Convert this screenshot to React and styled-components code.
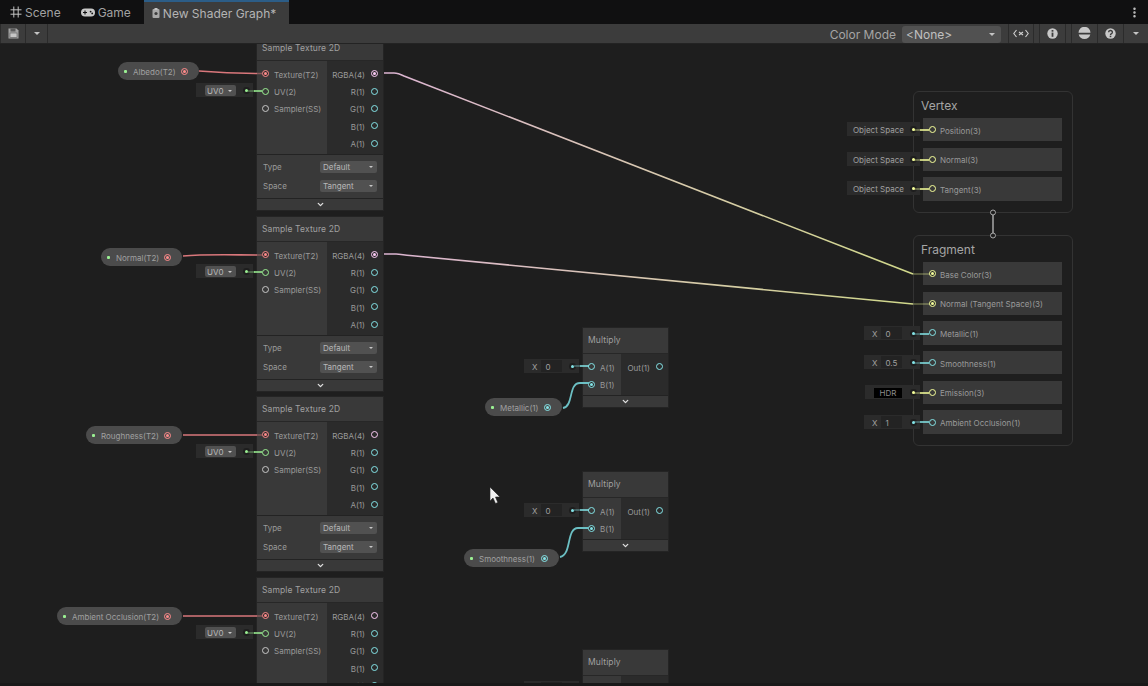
import React from "react";
import styled, { createGlobalStyle } from "styled-components";
import { ChevronDown, MoreVertical } from "lucide-react";

const CYAN = "#84e4e7";
const GREEN = "#9aef92";
const YELLOW = "#f6ff9a";
const PINK = "#fbcbf4";
const RED = "#ff8b8b";
const GREY = "#c8c8c8";

const GlobalStyle = createGlobalStyle`
  html, body {
    margin: 0;
    padding: 0;
    background: #1e1e1e;
    overflow: hidden;
  }
  * {
    box-sizing: border-box;
  }
`;

const Window = styled.div`
  width: 1148px;
  height: 686px;
  display: flex;
  flex-direction: column;
  font-family: Inter, "Noto Sans", sans-serif;
  color: #a0a0a0;
`;

const TabBar = styled.div`
  height: 24px;
  flex: none;
  background: #101011;
  display: flex;
  align-items: stretch;
`;

const Tab = styled.div`
  display: flex;
  align-items: center;
  gap: ${(p) => p.$gap || 3}px;
  padding: 0 ${(p) => p.$right}px 0 ${(p) => p.$left}px;
  margin-left: ${(p) => p.$shift || 0}px;
  font-size: 12px;
  color: ${(p) => (p.$active ? "#b4b4b4" : "#a2a2a2")};
  background: ${(p) => (p.$active ? "#3c3c3c" : "transparent")};
  border-top: ${(p) => (p.$active ? "2px solid #2c5d87" : "none")};
`;

const TabMenu = styled.div`
  margin-left: auto;
  width: 27px;
  display: flex;
  align-items: center;
  justify-content: center;
  color: #c4c4c4;
`;

const Toolbar = styled.div`
  height: 20px;
  flex: none;
  background: #3c3c3c;
  border-bottom: 1px solid #232323;
  display: flex;
  align-items: stretch;
`;

const ToolButton = styled.div`
  width: ${(p) => p.$w || 26}px;
  display: flex;
  align-items: center;
  justify-content: center;
  border-right: ${(p) => (p.$last ? "none" : "1px solid #2b2b2b")};
  border-left: ${(p) => (p.$first ? "1px solid #2b2b2b" : "none")};
  color: #c4c4c4;
`;

const Caret = styled.span`
  width: 0;
  height: 0;
  border-left: ${(p) => p.$s || 3}px solid transparent;
  border-right: ${(p) => p.$s || 3}px solid transparent;
  border-top: ${(p) => p.$s || 3}px solid ${(p) => p.$c || "#c4c4c4"};
  flex: none;
`;

const ToolLabel = styled.div`
  margin-left: auto;
  margin-right: 6px;
  padding-top: 1px;
  align-self: center;
  font-size: 12px;
  color: #a5a5a5;
`;

const ColorSelect = styled.div`
  width: 99px;
  height: 17px;
  margin: 2px 7px 0 0;
  padding: 0 6px 0 4px;
  border-radius: 3px;
  background: #515151;
  font-size: 12px;
  color: #c0c0c0;
  display: flex;
  align-items: center;
  justify-content: space-between;
`;

const Canvas = styled.div`
  flex: 1;
  position: relative;
  overflow: hidden;
  background: #1e1e1e;
`;

const BottomEdge = styled.div`
  height: 3px;
  flex: none;
  background: #191919;
`;

const Wires = styled.svg`
  position: absolute;
  left: 0;
  top: -44px;
  width: 1148px;
  height: 686px;
  z-index: 3;
  pointer-events: none;
`;

const Node = styled.div`
  position: absolute;
  left: ${(p) => p.$x}px;
  top: ${(p) => p.$y - 44}px;
  width: ${(p) => p.$w}px;
  background: #2b2b2b;
  box-shadow: 0 0 0 1px #242424;
`;

const NodeTitle = styled.div`
  height: ${(p) => p.$h}px;
  background: #393939;
  padding: 0 0 1px 5px;
  display: flex;
  align-items: center;
  font-size: 8.5px;
  letter-spacing: 0.12px;
  color: #a0a0a0;
  border-bottom: 1px solid #272727;
`;

const Ports = styled.div`
  display: flex;
  height: ${(p) => p.$h}px;
`;

const PortColumn = styled.div`
  width: ${(p) => p.$w}px;
  padding: ${(p) => p.$pad}px 0 0 5px;
  display: flex;
  flex-direction: column;
  background: ${(p) => (p.$input ? "#393939" : "#2b2b2b")};
`;

const PortRow = styled.div`
  height: 17.4px;
  display: flex;
  align-items: center;
  justify-content: ${(p) => (p.$out ? "flex-end" : "flex-start")};
  gap: ${(p) => (p.$out ? 6 : 5)}px;
  padding-right: ${(p) => (p.$out ? "5px" : "0")};
  font-size: 8px;
  color: #9a9a9a;
  white-space: nowrap;
`;

const PortText = styled.span`
  padding-top: 2px;
`;

const Port = styled.span`
  width: 7px;
  height: 7px;
  flex: none;
  border-radius: 50%;
  border: 1px solid ${(p) => p.$c};
  background: ${(p) => (p.$on ? "#2a2a2a" : "transparent")};
  display: flex;
  align-items: center;
  justify-content: center;
  &::after {
    content: "";
    display: ${(p) => (p.$on ? "block" : "none")};
    width: 3px;
    height: 3px;
    border-radius: 50%;
    background: ${(p) => p.$c};
  }
`;

const Controls = styled.div`
  height: 44px;
  background: #393939;
  border-top: 1px solid #232323;
  padding: 6px 6px 0 6px;
  display: flex;
  flex-direction: column;
  gap: 7px;
`;

const ControlRow = styled.div`
  height: 12px;
  display: flex;
  align-items: center;
  justify-content: space-between;
  font-size: 8px;
  color: #9a9a9a;
`;

const MiniSelect = styled.div`
  width: 57px;
  height: 12px;
  padding: 0 4px 0 3px;
  border-radius: 2px;
  background: #515151;
  font-size: 8px;
  color: #b8b8b8;
  display: flex;
  align-items: center;
  justify-content: space-between;
`;

const Collapse = styled.div`
  height: 12px;
  background: #393939;
  border-top: 1px solid #232323;
  display: flex;
  align-items: center;
  justify-content: center;
  color: #e0e0e0;
`;

const Pill = styled.div`
  position: absolute;
  left: ${(p) => p.$x}px;
  top: ${(p) => p.$y - 44}px;
  width: ${(p) => p.$w}px;
  height: 18px;
  border-radius: 9px;
  background: #4b4b4b;
  padding: 0 11px 0 6px;
  display: flex;
  align-items: center;
  font-size: 8px;
  color: #a0a0a0;
  white-space: nowrap;
`;

const PillDot = styled.span`
  width: 3px;
  height: 3px;
  flex: none;
  background: ${GREEN};
  border-radius: 1px;
  margin-right: 6px;
`;

const PillPort = styled(Port)`
  margin-left: auto;
  background: transparent;
`;

const Field = styled.div`
  position: absolute;
  left: ${(p) => p.$x}px;
  top: ${(p) => p.$y - 44}px;
  width: ${(p) => p.$w}px;
  height: 14px;
  background: #2b2b2b;
  display: flex;
  align-items: center;
  padding: 1px 5px 0 ${(p) => p.$pad || 5}px;
  font-size: 8px;
  color: #a0a0a0;
  z-index: 2;
`;

const FieldDot = styled.span`
  width: 3px;
  height: 3px;
  flex: none;
  border-radius: 50%;
  margin-left: auto;
  background: ${(p) => p.$c};
  box-shadow: 0 0 0 2px #1e1e1e;
`;

const FieldInput = styled.span`
  width: 21px;
  height: 12px;
  margin: -1px 0 0 4px;
  padding: 1px 0 0 4px;
  background: #232323;
  color: #a0a0a0;
  display: flex;
  align-items: center;
`;

const HdrSwatch = styled.span`
  width: 28px;
  height: 10px;
  margin-left: 4px;
  background: #000;
  color: #8c8c8c;
  font-size: 8px;
  display: flex;
  align-items: center;
  justify-content: center;
`;

const UvSelect = styled.span`
  width: 31px;
  height: 11px;
  margin-left: 4px;
  padding: 0 4px 0 2px;
  background: #515151;
  border-radius: 2px;
  color: #b8b8b8;
  display: flex;
  align-items: center;
  justify-content: space-between;
`;

const Stack = styled.div`
  position: absolute;
  left: 913px;
  top: ${(p) => p.$y - 44}px;
  width: 160px;
  height: ${(p) => p.$h}px;
  border: 1px solid #333;
  border-radius: 6px;
  background: #1e1e1e;
  padding: 6px 10px 0 9px;
`;

const StackTitle = styled.div`
  height: 20px;
  margin-left: -2px;
  font-size: 12px;
  color: #a5a5a5;
`;

const Block = styled.div`
  height: 23.2px;
  margin-bottom: 6.5px;
  background: #393939;
  display: flex;
  align-items: center;
  gap: 4px;
  padding-left: 6px;
  font-size: 8px;
  color: #9a9a9a;
  white-space: nowrap;
`;

const Cursor = styled.svg`
  position: absolute;
  left: 489px;
  top: ${486 - 44}px;
  z-index: 5;
`;

const OUTS = [
  ["RGBA(4)", PINK],
  ["R(1)", CYAN],
  ["G(1)", CYAN],
  ["B(1)", CYAN],
  ["A(1)", CYAN],
];

const SampleTexture = ({ y, clipped, usedRgba }) => (
  <Node $x={257} $y={y} $w={126}>
    <NodeTitle $h={25}>Sample Texture 2D</NodeTitle>
    <Ports $h={93}>
      <PortColumn $input $w={70} $pad={4}>
        <PortRow>
          <Port $c={RED} $on />
          <PortText>Texture(T2)</PortText>
        </PortRow>
        <PortRow>
          <Port $c={GREEN} />
          <PortText>UV(2)</PortText>
        </PortRow>
        <PortRow>
          <Port $c={GREY} />
          <PortText>Sampler(SS)</PortText>
        </PortRow>
      </PortColumn>
      <PortColumn $w={56} $pad={4}>
        {OUTS.map(([label, c], i) => (
          <PortRow $out key={label}>
            <PortText>{label}</PortText>
            <Port $c={c} $on={i === 0 && usedRgba} />
          </PortRow>
        ))}
      </PortColumn>
    </Ports>
    {!clipped && (
      <>
        <Controls>
          <ControlRow>
            Type
            <MiniSelect>
              Default
              <Caret $c="#c8c8c8" $s={2.5} />
            </MiniSelect>
          </ControlRow>
          <ControlRow>
            Space
            <MiniSelect>
              Tangent
              <Caret $c="#c8c8c8" $s={2.5} />
            </MiniSelect>
          </ControlRow>
        </Controls>
        <Collapse>
          <ChevronDown size={9} strokeWidth={3.5} />
        </Collapse>
      </>
    )}
  </Node>
);

const Multiply = ({ y, clipped }) => (
  <Node $x={583} $y={y} $w={85}>
    <NodeTitle $h={26}>Multiply</NodeTitle>
    <Ports $h={41}>
      <PortColumn $input $w={38} $pad={4}>
        <PortRow>
          <Port $c={CYAN} />
          <PortText>A(1)</PortText>
        </PortRow>
        <PortRow>
          <Port $c={CYAN} $on />
          <PortText>B(1)</PortText>
        </PortRow>
      </PortColumn>
      <PortColumn $w={47} $pad={4}>
        <PortRow $out>
          <PortText>Out(1)</PortText>
          <Port $c={CYAN} />
        </PortRow>
      </PortColumn>
    </Ports>
    {!clipped && (
      <Collapse>
        <ChevronDown size={9} strokeWidth={3.5} />
      </Collapse>
    )}
  </Node>
);

const PropertyPill = ({ x, y, w, label, c }) => (
  <Pill $x={x} $y={y} $w={w}>
    <PillDot />
    <PortText>{label}</PortText>
    <PillPort $c={c} $on />
  </Pill>
);

const InlineObjectSpace = ({ y }) => (
  <Field $x={847} $y={y} $w={73} $pad={6}>
    Object Space
    <FieldDot $c={YELLOW} />
  </Field>
);

const InlineNumber = ({ x, y, w, value, c }) => (
  <Field $x={x} $y={y} $w={w} $pad={8}>
    X
    <FieldInput>{value}</FieldInput>
    <FieldDot $c={c} />
  </Field>
);

const InlineUv = ({ y }) => (
  <Field $x={196} $y={y} $w={57} $pad={5}>
    <UvSelect>
      UV0
      <Caret $c="#c8c8c8" $s={2.5} />
    </UvSelect>
    <FieldDot $c={GREEN} />
  </Field>
);

const StackBlock = ({ label, c, on }) => (
  <Block>
    <Port $c={c} $on={on} />
    <PortText>{label}</PortText>
  </Block>
);

const Wire = ({ d, c, w = 1.6, o = 1 }) => <path d={d} stroke={c} strokeWidth={w} opacity={o} fill="none" />;

// short connector between an inline field and its port, dim where it leaves the dot
const Stub = ({ from, to, y, c }) => (
  <>
    <Wire d={`M${from + 2} ${y} L${from + 8} ${y}`} c={c} o={0.4} />
    <Wire d={`M${from + 8} ${y} L${to} ${y}`} c={c} w={1.8} o={0.85} />
  </>
);

const WireLayer = () => (
  <Wires viewBox="0 0 1148 686">
    <defs>
      <linearGradient id="rgbaToYellow" gradientUnits="userSpaceOnUse" x1="384" y1="0" x2="913" y2="0">
        <stop offset="0" stopColor="#dcb4d2" />
        <stop offset="0.5" stopColor="#d8c8b0" />
        <stop offset="1" stopColor="#d0d88a" />
      </linearGradient>
    </defs>
    <Wire d="M199 71 C225 73 240 73.3 257 73.5" c="#d9777b" />
    <Wire d="M183 256 C205 254 235 255 257 255" c="#d9777b" />
    <Wire d="M183 435 L257 435" c="#d9777b" />
    <Wire d="M183 616 C205 616 235 616 257 616" c="#d9777b" />
    <Wire d="M257 73.5 L262 73.5 M257 255 L262 255 M257 435 L262 435 M257 616 L262 616" c="#d9777b" o={0.5} />
    <Wire d="M384 73 L394 73 C398 73 400 74 404 76 L913 274" c="url(#rgbaToYellow)" />
    <Wire d="M384 254 L396 254 C400 254 404 255 410 255.5 L913 304" c="url(#rgbaToYellow)" />
    <path d="M913 274 L930 274 M913 304 L930 304" stroke={YELLOW} strokeWidth="1.5" opacity="0.35" fill="none" />
    <Stub from={246} to={262} y={91} c={GREEN} />
    <Stub from={246} to={262} y={272} c={GREEN} />
    <Stub from={246} to={262} y={452} c={GREEN} />
    <Stub from={246} to={262} y={633} c={GREEN} />
    <Stub from={912} to={929} y={130} c={YELLOW} />
    <Stub from={912} to={929} y={160} c={YELLOW} />
    <Stub from={912} to={929} y={189} c={YELLOW} />
    <Stub from={912} to={929} y={393} c={YELLOW} />
    <Stub from={912} to={929} y={334} c={CYAN} />
    <Stub from={912} to={929} y={363} c={CYAN} />
    <Stub from={912} to={929} y={422} c={CYAN} />
    <Stub from={572} to={589} y={366} c={CYAN} />
    <Stub from={572} to={589} y={510} c={CYAN} />
    <Wire d="M563 408 C574 406 568 383 580 383 L589 383" c="#6cc0c4" w={1.8} />
    <Wire d="M560 557 C572 555 566 528 578 528 L589 528" c="#6cc0c4" w={1.8} />
    <line x1="993" y1="214" x2="993" y2="234" stroke="#a8a8a8" strokeWidth="1.5" />
    <circle cx="993" cy="212.5" r="2.5" fill="#1e1e1e" stroke="#a8a8a8" />
    <circle cx="993" cy="235.5" r="2.5" fill="#1e1e1e" stroke="#a8a8a8" />
  </Wires>
);

const SceneIcon = () => (
  <svg width="12" height="12" viewBox="0 0 12 12" fill="none" stroke="#c4c4c4" strokeWidth="1">
    <path d="M3.8 0.5 V11.5 M8.2 0.5 V11.5 M0.5 3.8 H11.5 M0.5 8.2 H11.5" />
  </svg>
);

const GameIcon = () => (
  <svg width="14" height="9" viewBox="0 0 14 9">
    <rect x="0" y="0.5" width="14" height="8" rx="4" fill="#c8c8c8" />
    <path d="M4 2.5 V6.5 M2 4.5 H6" stroke="#101011" strokeWidth="1.1" />
    <circle cx="9.6" cy="3.6" r="0.9" fill="#101011" />
    <circle cx="11.2" cy="5.4" r="0.9" fill="#101011" />
  </svg>
);

const GraphIcon = () => (
  <svg width="8" height="10" viewBox="0 0 8 10">
    <rect x="0.5" y="1" width="7" height="9" rx="1" fill="#a8a8a8" />
    <rect x="2.5" y="0" width="3" height="2" fill="#c4c4c4" />
    <circle cx="4" cy="5.5" r="1.6" fill="#3c3c3c" />
  </svg>
);

const SaveIcon = () => (
  <svg width="11" height="11" viewBox="0 0 11 11">
    <path d="M0.5 0.5 H8.5 L10.5 2.5 V10.5 H0.5 Z" fill="#a4a4a4" />
    <rect x="2.5" y="0.5" width="5" height="3" fill="#5c5c5c" />
    <rect x="2" y="5" width="7" height="4.5" fill="#c6c6c6" stroke="#5c5c5c" strokeWidth="0.6" />
  </svg>
);

const InfoIcon = () => (
  <svg width="11" height="11" viewBox="0 0 11 11">
    <circle cx="5.5" cy="5.5" r="5.2" fill="#c8c8c8" />
    <rect x="4.6" y="2" width="1.8" height="1.7" fill="#3c3c3c" />
    <rect x="4.6" y="4.6" width="1.8" height="4.2" fill="#3c3c3c" />
  </svg>
);

const HelpIcon = () => (
  <svg width="11" height="11" viewBox="0 0 11 11">
    <circle cx="5.5" cy="5.5" r="5.2" fill="#c8c8c8" />
    <path d="M3.6 4.2 A1.9 1.7 0 1 1 6.2 5.8 Q5.5 6.2 5.5 7" fill="none" stroke="#3c3c3c" strokeWidth="1.4" />
    <rect x="4.7" y="7.7" width="1.6" height="1.5" fill="#3c3c3c" />
  </svg>
);

export default function App() {
  return (
    <Window>
      <GlobalStyle />
      <TabBar>
        <Tab $left={10} $right={9}>
          <SceneIcon />
          Scene
        </Tab>
        <Tab $left={10} $right={13} $shift={1}>
          <GameIcon />
          Game
        </Tab>
        <Tab $active $left={8} $right={13} $gap={3}>
          <GraphIcon />
          New Shader Graph*
        </Tab>
        <TabMenu>
          <MoreVertical size={13} strokeWidth={2.6} />
        </TabMenu>
      </TabBar>
      <Toolbar>
        <ToolButton $first>
          <SaveIcon />
        </ToolButton>
        <ToolButton $w={22}>
          <Caret $s={3.5} />
        </ToolButton>
        <ToolLabel>Color Mode</ToolLabel>
        <ColorSelect>
          &lt;None&gt;
          <Caret $s={3.5} />
        </ColorSelect>
        <ToolButton $first $w={26}>
          <svg width="16" height="9" viewBox="0 0 16 9" fill="none" stroke="#d0d0d0" strokeWidth="1.1">
            <path d="M3.5 1 L0.8 4.5 L3.5 8 M12.5 1 L15.2 4.5 L12.5 8 M6 3 L10 6 M10 3 L6 6" />
          </svg>
        </ToolButton>
        <ToolButton $w={6} />
        <ToolButton $w={26}>
          <InfoIcon />
        </ToolButton>
        <ToolButton $w={6} />
        <ToolButton $w={26}>
          <svg width="13" height="13" viewBox="0 0 13 13">
            <path d="M0.5 5.8 A6 6 0 0 1 12.5 5.8 Z M0.7 7.6 H12.3 A6 6 0 0 1 0.7 7.6 Z" fill="#c8c8c8" />
          </svg>
        </ToolButton>
        <ToolButton $w={26}>
          <HelpIcon />
        </ToolButton>
        <ToolButton $w={24} $last>
          <Caret $s={3.5} />
        </ToolButton>
      </Toolbar>
      <Canvas>
        <SampleTexture y={36} usedRgba />
        <SampleTexture y={217} usedRgba />
        <SampleTexture y={397} />
        <SampleTexture y={578} clipped />

        <Multiply y={328} />
        <Multiply y={472} />
        <Multiply y={650} clipped />

        <PropertyPill x={118} y={62} w={81} label="Albedo(T2)" c={RED} />
        <PropertyPill x={101} y={248} w={81} label="Normal(T2)" c={RED} />
        <PropertyPill x={86} y={426} w={96} label="Roughness(T2)" c={RED} />
        <PropertyPill x={57} y={607} w={125} label="Ambient Occlusion(T2)" c={RED} />
        <PropertyPill x={485} y={398} w={77} label="Metallic(1)" c={CYAN} />
        <PropertyPill x={464} y={549} w={95} label="Smoothness(1)" c={CYAN} />

        <InlineUv y={83} />
        <InlineUv y={264} />
        <InlineUv y={444} />
        <InlineUv y={625} />

        <InlineNumber x={524} y={359} w={55} value="0" c={CYAN} />
        <InlineNumber x={524} y={503} w={55} value="0" c={CYAN} />
        <InlineNumber x={524} y={681} w={55} value="0" c={CYAN} />

        <Stack $y={91} $h={122}>
          <StackTitle>Vertex</StackTitle>
          <StackBlock label="Position(3)" c={YELLOW} />
          <StackBlock label="Normal(3)" c={YELLOW} />
          <StackBlock label="Tangent(3)" c={YELLOW} />
        </Stack>
        <Stack $y={235} $h={211}>
          <StackTitle>Fragment</StackTitle>
          <StackBlock label="Base Color(3)" c={YELLOW} on />
          <StackBlock label="Normal (Tangent Space)(3)" c={YELLOW} on />
          <StackBlock label="Metallic(1)" c={CYAN} />
          <StackBlock label="Smoothness(1)" c={CYAN} />
          <StackBlock label="Emission(3)" c={YELLOW} />
          <StackBlock label="Ambient Occlusion(1)" c={CYAN} />
        </Stack>

        <InlineObjectSpace y={122} />
        <InlineObjectSpace y={152} />
        <InlineObjectSpace y={181} />
        <InlineNumber x={864} y={326} w={56} value="0" c={CYAN} />
        <InlineNumber x={864} y={355} w={56} value="0.5" c={CYAN} />
        <Field $x={865} $y={385} $w={55} $pad={5}>
          <HdrSwatch>HDR</HdrSwatch>
          <FieldDot $c={YELLOW} />
        </Field>
        <InlineNumber x={864} y={415} w={56} value="1" c={CYAN} />

        <WireLayer />
        <Cursor width="13" height="20" viewBox="0 0 13 20">
          <path d="M1 1 L1 15 L4 12 L6.5 17.5 L8.8 16.5 L6.5 11 L11 11 Z" fill="#f2f2f2" stroke="#222" strokeWidth="0.6" />
        </Cursor>
      </Canvas>
      <BottomEdge />
    </Window>
  );
}
